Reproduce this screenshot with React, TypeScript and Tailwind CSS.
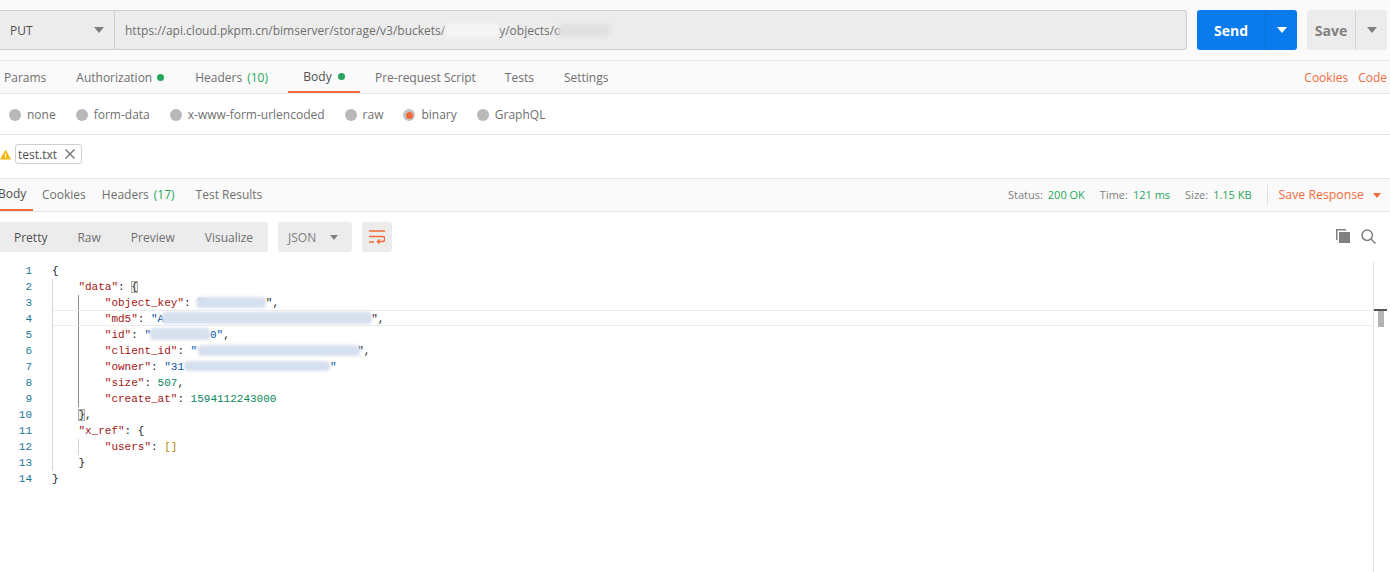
import React from 'react';

const Caret = ({ small, className }: { small?: boolean; className: string }) => (
  <svg viewBox="0 0 10 6" className={`${small ? 'h-[5px] w-[8px]' : 'h-[6px] w-[10px]'} ${className}`}>
    <path d="M0 0h10L5 6z" fill="currentColor" />
  </svg>
);

const Dot = ({ className = '' }: { className?: string }) => (
  <span className={`inline-block h-[7px] w-[7px] rounded-full bg-[#26a65b] ${className}`} />
);

const Radio = ({ label, className, active }: { label: string; className: string; active?: boolean }) => (
  <div className={`flex items-center ${className}`}>
    <span className={`flex h-3 w-3 items-center justify-center rounded-full ${active ? 'bg-[#c4c4c4]' : 'bg-[#b8b8b8]'}`}>
      {active && <span className="h-[7px] w-[7px] rounded-full bg-[#f26b3a]" />}
    </span>
    <span className="ml-[6px] text-[#6f6f6f]">{label}</span>
  </div>
);

const Key = ({ children }: { children: React.ReactNode }) => <span className="text-[#a31515]">{children}</span>;
const Num = ({ children }: { children: React.ReactNode }) => <span className="text-[#09885a]">{children}</span>;
const Str = ({ children }: { children: React.ReactNode }) => <span className="text-[#0451a5]">{children}</span>;

// guides: list of guide colours, one per indent level
const Line = ({ n, guides = [], children }: { n: number; guides?: string[]; children: React.ReactNode }) => (
  <div className="flex h-4 items-center">
    <span className="w-[32px] shrink-0 text-right text-[#237893]">{n}</span>
    <span className="w-[20px] shrink-0" />
    {guides.map((g, i) => (
      <span key={i} className={`h-4 w-[26.4px] shrink-0 border-l ${g}`} />
    ))}
    <span className="whitespace-pre text-[#222]">{children}</span>
  </div>
);

const L = 'border-[#d4d4d4]';
const D = 'border-[#8c8c8c]';

const Smudge = ({ className }: { className: string }) => (
  <div className={`absolute rounded-sm bg-[#d6dfee] blur-[1.5px] ${className}`} />
);

export default function App() {
  return (
    <div className="relative h-[572px] w-[1390px] overflow-hidden bg-white font-['Open_Sans','Noto_Sans',sans-serif] text-[12px] leading-4 text-[#6f6f6f]">
      {/* request bar */}
      <div className="flex h-[61px] items-start border-b border-[#e6e6e6] bg-[#fafafa] pt-[10px]">
        <div className="flex h-10 w-[1187px] rounded-r-[3px] border border-l-0 border-[#d0d0d0] bg-[#ececec]">
          <div className="flex w-[115px] items-center justify-between border-r border-[#d0d0d0] pl-[10px] pr-[10px] text-[#505050]">
            <span className="pt-px">PUT</span>
            <Caret className="text-[#808080]" />
          </div>
          <div className="flex flex-1 items-center pl-[10px] pt-px text-[12px] text-[#6f6f6f]">
            <span>https://api.cloud.pkpm.cn/bimserver/storage/v3/buckets/</span>
            <div className="h-[15px] w-[54px] rounded bg-[#f4f4f4] blur-[2px]" />
            <span>y/objects/o</span>
            <div className="-ml-[3px] h-[13px] w-[52px] rounded bg-[#e0e0e0] blur-[2px]" />
          </div>
        </div>
        <div className="ml-[10px] flex h-10 w-[100px] rounded-[3px] bg-[#097bed] font-bold text-white">
          <div className="flex w-[69px] items-center justify-center border-r border-[#0a6fd4] pt-px text-[14px]">Send</div>
          <div className="flex flex-1 items-center justify-center">
            <Caret className="text-white" />
          </div>
        </div>
        <div className="ml-[10px] flex h-10 w-[80px] rounded-[3px] bg-[#ececec] font-bold text-[#808080]">
          <div className="flex w-[49px] items-center justify-center border-r border-[#d6d6d6] pt-px text-[14px]">Save</div>
          <div className="flex flex-1 items-center justify-center">
            <Caret className="text-[#808080]" />
          </div>
        </div>
      </div>

      {/* request tabs */}
      <div className="flex h-[33px] items-center border-b border-[#e6e6e6] bg-[#fafafa] pl-1">
        <span className="pt-px">Params</span>
        <span className="ml-[30px] pt-px">Authorization</span>
        <Dot className="ml-[5px]" />
        <span className="ml-[31px] pt-px">Headers</span>
        <span className="ml-[5px] pt-px text-[#26a65b]">(10)</span>
        <div className="ml-[20px] flex h-full w-[72px] items-center justify-center border-b-2 border-[#f26b3a] text-[#505050]">
          <span className="pt-px">Body</span>
          <Dot className="ml-[6px]" />
        </div>
        <span className="ml-[15px] pt-px">Pre-request Script</span>
        <span className="ml-[29px] pt-px">Tests</span>
        <span className="ml-[30px] pt-px">Settings</span>
        <span className="ml-auto pt-px text-[#f26b3a]">Cookies</span>
        <span className="ml-[10px] mr-[3px] pt-px text-[#f26b3a]">Code</span>
      </div>

      {/* body type */}
      <div className="flex h-[41px] items-center border-b border-[#e6e6e6] pl-[9px] pt-[2px]">
        <Radio label="none" className="" />
        <Radio label="form-data" className="ml-5" />
        <Radio label="x-www-form-urlencoded" className="ml-5" />
        <Radio label="raw" className="ml-5" />
        <Radio label="binary" active className="ml-5" />
        <Radio label="GraphQL" className="ml-5" />
      </div>

      {/* file */}
      <div className="flex h-[43px] items-center pb-[5px]">
        <svg viewBox="0 0 12 11" className="h-[11px] w-[11px]">
          <path d="M6 0l6 11H0z" fill="#f5b50a" />
          <path d="M5.4 4h1.2v3.8H5.4zM5.4 8.5h1.2v1.1H5.4z" fill="#fff" />
        </svg>
        <div className="ml-[4px] flex h-5 w-[67px] items-center rounded-[3px] border border-[#cfcfcf] pl-[2px] text-[#505050]">
          <span className="pt-px">test.txt</span>
          <svg viewBox="0 0 10 10" className="ml-[8px] h-[10px] w-[10px] text-[#707070]">
            <path d="M0.5 0.5l9 9M9.5 0.5l-9 9" stroke="currentColor" strokeWidth="1.3" />
          </svg>
        </div>
      </div>

      {/* response tabs */}
      <div className="flex h-[34px] items-center border-y border-[#e6e6e6] bg-[#fafafa]">
        <div className="flex h-full w-[33px] items-center border-b-2 border-[#f26b3a] text-[#505050]">
          <span className="-ml-[2px]">Body</span>
        </div>
        <span className="ml-[9px]">Cookies</span>
        <span className="ml-4">Headers</span>
        <span className="ml-[5px] text-[#26a65b]">(17)</span>
        <span className="ml-[21px]">Test Results</span>
        <div className="ml-auto flex items-center pr-[9px] text-[11px]">
          <span className="text-[#808080]">Status:</span>
          <span className="ml-[5px] text-[#26a65b]">200 OK</span>
          <span className="ml-[15px] text-[#808080]">Time:</span>
          <span className="ml-[5px] text-[#26a65b]">121 ms</span>
          <span className="ml-[15px] text-[#808080]">Size:</span>
          <span className="ml-[5px] text-[#26a65b]">1.15 KB</span>
          <span className="ml-[15px] h-5 border-l border-[#e0e0e0]" />
          <span className="ml-[11px] text-[12.3px] text-[#f26b3a]">Save Response</span>
          <Caret small className="ml-[9px] text-[#f26b3a]" />
        </div>
      </div>

      {/* response toolbar */}
      <div className="flex h-[50px] items-start pt-[10px]">
        <div className="flex h-[30px] w-[268px] items-center rounded-r-[3px] bg-[#ececec] pl-[14px] pt-px">
          <span className="text-[#505050]">Pretty</span>
          <span className="ml-[30px]">Raw</span>
          <span className="ml-[30px]">Preview</span>
          <span className="ml-[30px]">Visualize</span>
        </div>
        <div className="ml-[10px] flex h-[30px] w-[74px] items-center justify-between rounded-[3px] bg-[#ececec] pl-[10px] pr-[14px] text-[#808080]">
          <span className="pt-px">JSON</span>
          <Caret small className="text-[#808080]" />
        </div>
        <div className="ml-[10px] flex h-[30px] w-[30px] items-center justify-center rounded-[3px] bg-[#ececec]">
          <svg viewBox="0 0 16 14" className="h-[14px] w-4 text-[#f26b3a]" fill="none" stroke="currentColor" strokeWidth="1.5">
            <path d="M0 1h16M0 6.5h13.5a2.2 2.2 0 0 1 0 5H9M0 12h5M10.5 9.5L8.5 11.5l2 2" />
          </svg>
        </div>
        <div className="ml-auto mr-[14px] flex h-[30px] items-center gap-[11px] pb-[2px] text-[#808080]">
          <svg viewBox="0 0 14 14" className="h-[14px] w-[14px]" fill="currentColor">
            <path d="M0 0h10v1.5H1.5V11H0z" />
            <path d="M3 3h11v11H3z" />
          </svg>
          <svg viewBox="0 0 15 15" className="h-[15px] w-[15px]" fill="none" stroke="currentColor" strokeWidth="1.5">
            <circle cx="6.2" cy="6.2" r="5.2" />
            <path d="M10 10l4.5 4.5" />
          </svg>
        </div>
      </div>

      {/* code */}
      <div className="pt-px font-['Liberation_Mono',monospace] text-[11px] leading-4">
        <Line n={1}>{'{'}</Line>
        <Line n={2} guides={[L]}>
          <Key>"data"</Key>: <span className="bg-[#eef0ee] outline outline-1 -outline-offset-1 outline-[#b0b0b0]">{'{'}</span>
        </Line>
        <Line n={3} guides={[L, D]}><Key>"object_key"</Key>: <Str>"</Str><span className="ml-[62px]">",</span></Line>
        <Line n={4} guides={[L, D]}><Key>"md5"</Key>: <Str>"A</Str><span className="ml-[207px]">",</span></Line>
        <Line n={5} guides={[L, D]}><Key>"id"</Key>: <Str>"</Str><span className="ml-[59px] text-[#0451a5]">0"</span>,</Line>
        <Line n={6} guides={[L, D]}><Key>"client_id"</Key>: <Str>"</Str><span className="ml-[160px]">",</span></Line>
        <Line n={7} guides={[L, D]}><Key>"owner"</Key>: <Str>"31</Str><span className="ml-[146px] text-[#0451a5]">"</span></Line>
        <Line n={8} guides={[L, D]}><Key>"size"</Key>: <Num>507</Num>,</Line>
        <Line n={9} guides={[L, D]}><Key>"create_at"</Key>: <Num>1594112243000</Num></Line>
        <Line n={10} guides={[L]}><span className="bg-[#eef0ee] outline outline-1 -outline-offset-1 outline-[#b0b0b0]">{'}'}</span>,</Line>
        <Line n={11} guides={[L]}><Key>"x_ref"</Key>: {'{'}</Line>
        <Line n={12} guides={[L, L]}><Key>"users"</Key>: <span className="text-[#b8860b]">[]</span></Line>
        <Line n={13} guides={[L]}>{'}'}</Line>
        <Line n={14}>{'}'}</Line>
      </div>

      {/* active line highlight, blur patches and overview ruler sit over the editor */}
      <div className="absolute left-[53px] top-[310px] h-4 w-[1321px] border-y border-[#ececec]" />
      <Smudge className="left-[196px] top-[297px] h-[11px] w-[70px]" />
      <Smudge className="left-[162px] top-[312px] h-3 w-[210px]" />
      <Smudge className="left-[150px] top-[328px] h-3 w-[60px]" />
      <Smudge className="left-[198px] top-[345px] h-[11px] w-[162px]" />
      <Smudge className="left-[184px] top-[361px] h-[10px] w-[146px]" />
      <div className="absolute bottom-0 left-[1373px] top-[262px] border-l border-[#e0e0e0]" />
      <div className="absolute left-[1378px] top-[311px] h-4 w-[6px] bg-[#b4b4b4]" />
      <div className="absolute left-[1374px] top-[309px] h-[2px] w-[13px] bg-[#555]" />
    </div>
  );
}
